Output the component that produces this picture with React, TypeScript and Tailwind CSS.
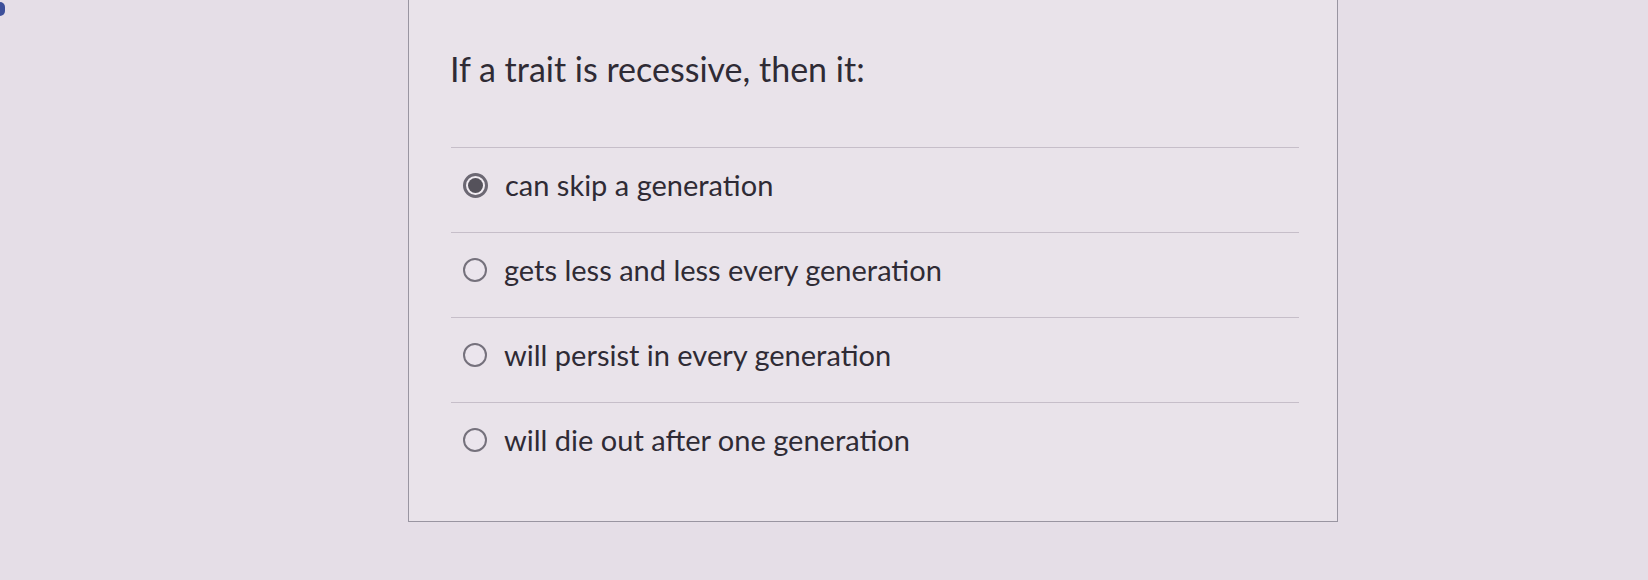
import React from 'react';

const options = [
    'can skip a generation',
    'gets less and less every generation',
    'will persist in every generation',
    'will die out after one generation',
];

const Radio: React.FC<{ checked: boolean }> = ({ checked }) =>
    checked ? (
        <span className="w-[25px] h-[25px] rounded-full border-[3px] border-[#6c6873] flex items-center justify-center shrink-0 bg-[#f1ecf2]">
            <span className="w-[15px] h-[15px] rounded-full bg-[#55525b]" />
        </span>
    ) : (
        <span className="w-[24px] h-[24px] rounded-full border-[2px] border-[#75717c] shrink-0 bg-[#ebe5ed]" />
    );

export default function App() {
    return (
        <div
            className="w-[1648px] h-[580px] bg-[#e5dee7] relative overflow-hidden"
            style={{ fontFamily: 'Lato, "Open Sans", sans-serif' }}
        >
            <span className="absolute left-0 top-[2px] w-[5px] h-[14px] rounded-r-full bg-[#3d4f9a]" />
            <div className="ml-[408px] w-[930px] h-[522px] border-l border-r border-b border-[#9995a1] bg-[#e9e3ea] flex flex-col">
                <div className="h-[147px] pl-[41px] pt-[49px]">
                    <h1 className="text-[34px] leading-[40px] text-[#2f2b35]">
                        If a trait is recessive, then it:
                    </h1>
                </div>
                <div className="ml-[42px] w-[848px] flex flex-col">
                    {options.map((opt, i) => (
                        <div
                            key={i}
                            className="h-[85px] border-t border-[#c6bec9] flex items-start pt-[19px] pl-[12px]"
                        >
                            <div className="h-[36px] flex items-center gap-[17px]">
                                <Radio checked={i === 0} />
                                <span className="text-[29px] leading-[36px] text-[#2f2b35]">{opt}</span>
                            </div>
                        </div>
                    ))}
                </div>
            </div>
        </div>
    );
}
